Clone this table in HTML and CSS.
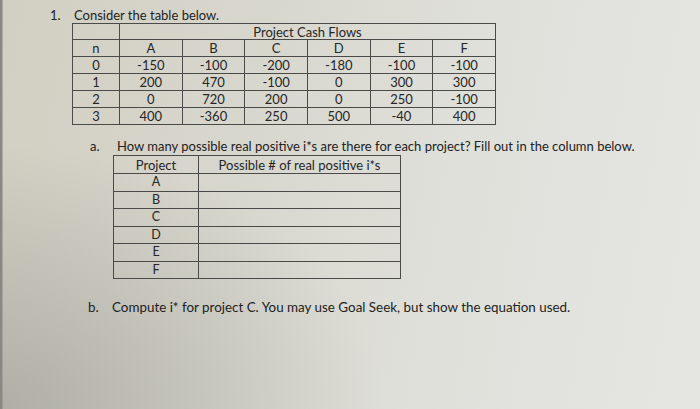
FILE: index.html
```html
<!DOCTYPE html>
<html>
<head>
<meta charset="utf-8">
<link rel="stylesheet" href="styles.css">
</head>
<body>
<div class="page">
  <p class="q q1"><span class="num">1.</span><span>Consider the table below.</span></p>
  <table class="cf">
    <colgroup>
      <col class="c-n"><col class="c-p"><col class="c-p"><col class="c-p"><col class="c-p"><col class="c-p"><col class="c-p">
    </colgroup>
    <tr class="r-top"><td></td><td colspan="6">Project Cash Flows</td></tr>
    <tr><td>n</td><td>A</td><td>B</td><td>C</td><td>D</td><td>E</td><td>F</td></tr>
    <tr><td>0</td><td>-150</td><td>-100</td><td>-200</td><td>-180</td><td>-100</td><td>-100</td></tr>
    <tr><td>1</td><td>200</td><td>470</td><td>-100</td><td>0</td><td>300</td><td>300</td></tr>
    <tr><td>2</td><td>0</td><td>720</td><td>200</td><td>0</td><td>250</td><td>-100</td></tr>
    <tr><td>3</td><td>400</td><td>-360</td><td>250</td><td>500</td><td>-40</td><td>400</td></tr>
  </table>
  <p class="q qa"><span class="num">a.</span><span>How many possible real positive i*s are there for each project? Fill out in the column below.</span></p>
  <table class="pr">
    <colgroup><col class="c-proj"><col class="c-ans"></colgroup>
    <tr class="r-head"><td>Project</td><td>Possible # of real positive i*s</td></tr>
    <tr><td>A</td><td></td></tr>
    <tr><td>B</td><td></td></tr>
    <tr><td>C</td><td></td></tr>
    <tr><td>D</td><td></td></tr>
    <tr><td>E</td><td></td></tr>
    <tr><td>F</td><td></td></tr>
  </table>
  <p class="q qb"><span class="num">b.</span><span>Compute i* for project C. You may use Goal Seek, but show the equation used.</span></p>
</div>
</body>
</html>
```

FILE: styles.css
```css
html, body {
  margin: 0;
  padding: 0;
}
body {
  width: 700px;
  height: 409px;
  overflow: hidden;
  font-family: "Lato", "Open Sans", sans-serif;
  color: #222;
  background:
    linear-gradient(to right, #8a8882 0, #8a8882 2px, transparent 3px),
    radial-gradient(ellipse 55% 65% at 0% 100%, rgba(140,140,135,0.5), rgba(140,140,135,0) 100%),
    linear-gradient(100deg, #d2cfc2 0%, #d8d7ce 35%, #e0e0db 65%, #e5e6e2 100%);
}
.page {
  padding-top: 8px;
}
.q {
  margin: 0;
  font-size: 13px;
  line-height: 15px;
  display: flex;
}
.q1 { padding-left: 50px; }
.q1 .num { width: 24px; }
.qa { padding-left: 90px; margin-top: 14px; }
.qa .num { width: 27px; }
.qb { padding-left: 88px; margin-top: 21px; font-size: 13.4px; }
.qb .num { width: 24px; }

table {
  border-collapse: collapse;
  font-size: 13px;
  color: #262626;
}
td {
  border: 1px solid #4a4a48;
  padding: 0;
  text-align: center;
  line-height: 14px;
}
.cf {
  margin-left: 72px;
  margin-top: 0;
  width: 424px;
  table-layout: fixed;
}
.cf .c-n { width: 47px; }
.cf tr { height: 17px; }
.cf tr.r-top { height: 16px; }

.pr {
  margin-left: 113px;
  margin-top: 1px;
  width: 288px;
  table-layout: fixed;
}
.pr .c-proj { width: 85px; }
.pr tr { height: 17.5px; }
.pr tr.r-head { height: 18px; }
.pr tr td { font-size: 12.5px; }
.pr tr.r-head td { font-size: 13px; }
```
